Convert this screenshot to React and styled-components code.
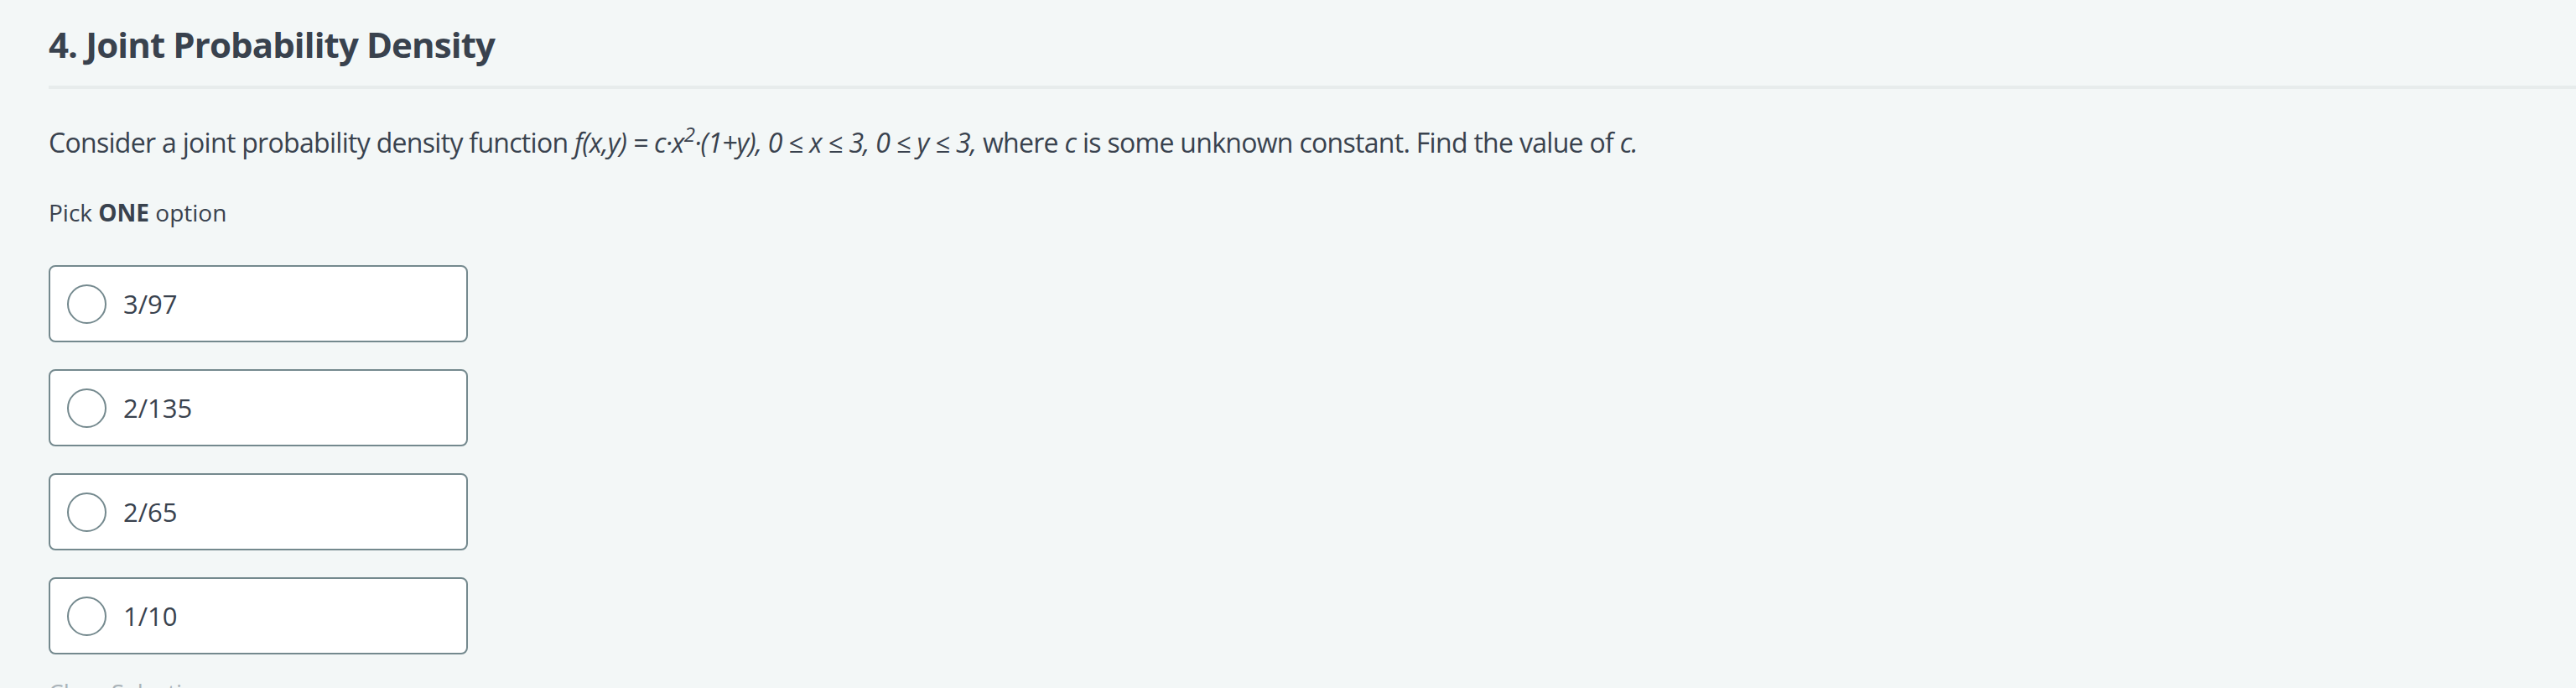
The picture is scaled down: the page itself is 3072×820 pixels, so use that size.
import React from 'react';
import styled, { createGlobalStyle } from 'styled-components';

const GlobalStyle = createGlobalStyle`
  body {
    margin: 0;
    background: #f3f7f7;
    font-family: "Open Sans", "Noto Sans", sans-serif;
    color: #39424e;
  }
`;

const options = ['3/97', '2/135', '2/65', '1/10'];

const App = () => {
  return (
    <>
      <GlobalStyle />
      <Page>
        <Header>
          <Title>4. Joint Probability Density</Title>
        </Header>
        <Question>
          Consider a joint probability density function{' '}
          <Math>
            f(x,y) = c·x<Sup>2</Sup>·(1+y), 0 ≤ x ≤ 3, 0 ≤ y ≤ 3,
          </Math>{' '}
          where <Math>c</Math> is some unknown constant. Find the value of{' '}
          <Math>c.</Math>
        </Question>
        <Hint>
          Pick <strong>ONE</strong> option
        </Hint>
        <OptionList>
          {options.map((opt) => (
            <Option key={opt}>
              <Radio />
              <OptionText>{opt}</OptionText>
            </Option>
          ))}
        </OptionList>
        <ClearButton>Clear Selection</ClearButton>
      </Page>
    </>
  );
};
export default App;

const Page = styled.div`
  padding-left: 58px;
`;

const Header = styled.div`
  padding: 28px 0 24px;
  border-bottom: 4px solid #e7ecec;
`;

const Title = styled.h1`
  margin: 0;
  font-size: 42px;
  line-height: 1.2;
  font-weight: 700;
  letter-spacing: -0.9px;
  color: #39424e;
`;

const Question = styled.p`
  margin: 40px 0 0;
  font-size: 32px;
  line-height: 1.5;
  letter-spacing: -0.7px;
`;

const Math = styled.em`
  font-style: italic;
`;

const Sup = styled.sup`
  font-size: 0.75em;
  line-height: 0;
  vertical-align: 0.55em;
`;

const Hint = styled.p`
  margin: 38px 0 0;
  font-size: 28px;
  line-height: 1.5;

  strong {
    font-weight: 700;
  }
`;

const OptionList = styled.div`
  display: flex;
  flex-direction: column;
  gap: 32px;
  margin-top: 42px;
`;

const Option = styled.label`
  display: flex;
  align-items: center;
  gap: 20px;
  box-sizing: border-box;
  width: 500px;
  height: 92px;
  padding: 0 20px;
  background: #ffffff;
  border: 2px solid #74898e;
  border-radius: 8px;
  cursor: pointer;
`;

const Radio = styled.span`
  box-sizing: border-box;
  width: 47px;
  height: 47px;
  border: 2px solid #74898e;
  border-radius: 50%;
  background: #ffffff;
  flex-shrink: 0;
`;

const OptionText = styled.span`
  font-size: 31px;
  line-height: 1.4;
  color: #39424e;
`;

const ClearButton = styled.div`
  margin-top: 24px;
  font-size: 28px;
  line-height: 1.5;
  color: #aab3b9;
`;
